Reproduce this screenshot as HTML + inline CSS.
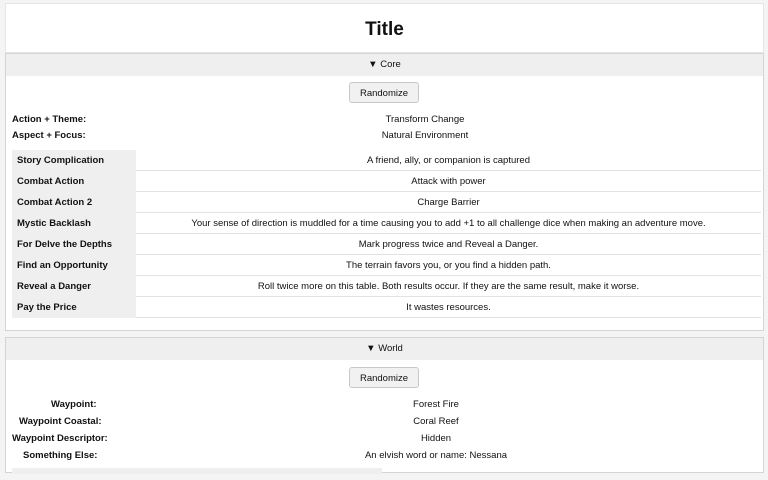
<!DOCTYPE html>
<html><head><meta charset="utf-8"><style>
*{box-sizing:border-box;margin:0;padding:0}
body{width:768px;height:480px;overflow:hidden;background:#f4f4f4;font-family:"Liberation Sans",sans-serif;font-size:9.5px;color:#111;position:relative}
.abs{position:absolute}
.card{position:absolute;left:5px;width:759px;background:#fff;border:1px solid #d4d4d4}
.hdr{position:absolute;left:0;right:0;top:0;height:22px;background:#efefef;text-align:center;line-height:22px;font-size:9.5px}
.btn{position:absolute;width:70px;height:21px;border:1px solid #c8c8c8;border-radius:3px;background:#f1f1f1;text-align:center;line-height:20px;font-size:9.5px}
.lbl{position:absolute;font-weight:bold;white-space:nowrap}
.val{position:absolute;text-align:center;white-space:nowrap}
.row{position:absolute;left:6px;width:749px;height:21px;border-bottom:1px solid #e2e2e2}
.row .k{position:absolute;left:0;top:0;width:124px;height:21px;background:#efefef;font-weight:bold;padding-left:5px;line-height:22px}
.row .v{position:absolute;left:124px;right:0;top:0;text-align:center;line-height:22px;white-space:nowrap}
</style></head><body>
<div class="card" style="top:3px;height:50px;border-color:#e6e6e6"><div class="abs" style="left:0;right:0;top:15px;text-align:center;font-size:19px;font-weight:bold">Title</div></div>

<div class="card" style="top:53px;height:278px">
<div class="hdr">▼ Core</div>
<div class="btn" style="left:343px;top:28px;line-height:22px">Randomize</div>
<div class="lbl" style="left:6px;top:60px">Action + Theme:</div><div class="val" style="left:219px;width:400px;top:60px">Transform Change</div>
<div class="lbl" style="left:6px;top:76px">Aspect + Focus:</div><div class="val" style="left:219px;width:400px;top:76px">Natural Environment</div>
<div class="row" style="top:96px"><div class="k">Story Complication</div><div class="v">A friend, ally, or companion is captured</div></div>
<div class="row" style="top:117px"><div class="k">Combat Action</div><div class="v">Attack with power</div></div>
<div class="row" style="top:138px"><div class="k">Combat Action 2</div><div class="v">Charge Barrier</div></div>
<div class="row" style="top:159px"><div class="k">Mystic Backlash</div><div class="v">Your sense of direction is muddled for a time causing you to add +1 to all challenge dice when making an adventure move.</div></div>
<div class="row" style="top:180px"><div class="k">For Delve the Depths</div><div class="v">Mark progress twice and Reveal a Danger.</div></div>
<div class="row" style="top:201px"><div class="k">Find an Opportunity</div><div class="v">The terrain favors you, or you find a hidden path.</div></div>
<div class="row" style="top:222px"><div class="k">Reveal a Danger</div><div class="v">Roll twice more on this table. Both results occur. If they are the same result, make it worse.</div></div>
<div class="row" style="top:243px"><div class="k">Pay the Price</div><div class="v">It wastes resources.</div></div>
</div>

<div class="card" style="top:337px;height:136px">
<div class="hdr">▼ World</div>
<div class="btn" style="left:343px;top:29px;line-height:22px">Randomize</div>
<div class="lbl" style="left:45px;top:61px">Waypoint:</div><div class="val" style="left:230px;width:400px;top:61px">Forest Fire</div>
<div class="lbl" style="left:13px;top:78px">Waypoint Coastal:</div><div class="val" style="left:230px;width:400px;top:78px">Coral Reef</div>
<div class="lbl" style="left:6px;top:95px">Waypoint Descriptor:</div><div class="val" style="left:230px;width:400px;top:95px">Hidden</div>
<div class="lbl" style="left:17px;top:112px">Something Else:</div><div class="val" style="left:230px;width:400px;top:112px">An elvish word or name: Nessana</div>
<div class="abs" style="left:6px;top:130px;width:370px;height:6px;background:#efefef"></div>
</div>
</body></html>
